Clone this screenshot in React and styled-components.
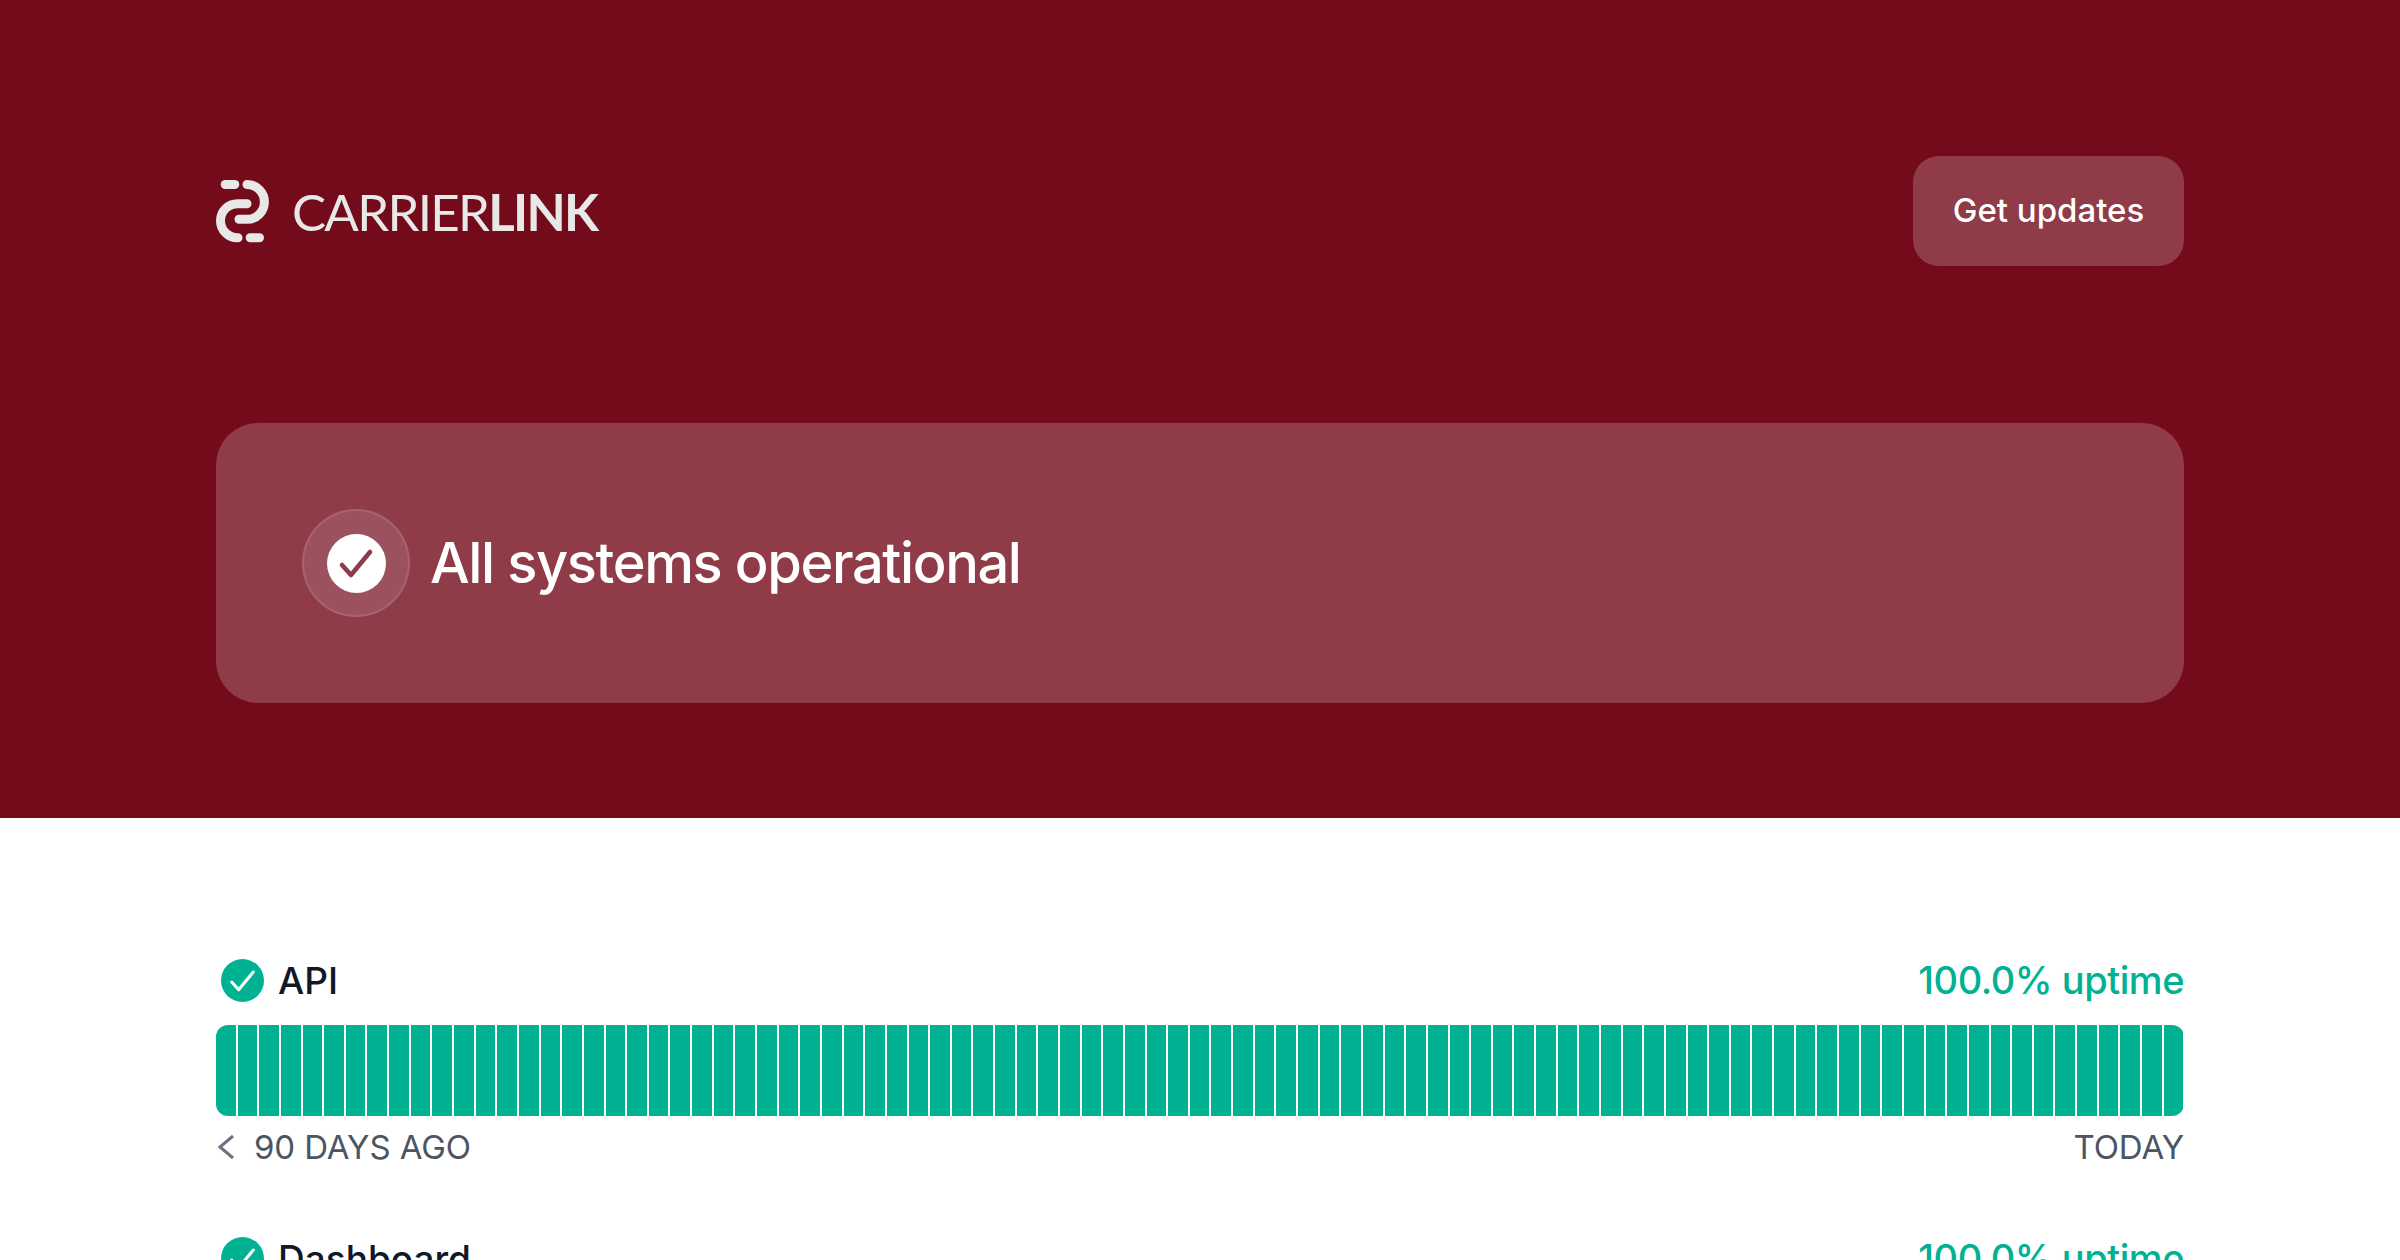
import React from "react";
import styled, { createGlobalStyle } from "styled-components";

const Global = createGlobalStyle`
  html, body { margin: 0; padding: 0; background: #fff; height: 1260px; overflow: hidden; }
  body { font-family: "Inter", "Liberation Sans", sans-serif; -webkit-font-smoothing: antialiased; }
`;
const Hero = styled.header`
  background: #730b1b;
  height: 818px;
  padding: 156px 216px 0;
  box-sizing: border-box;
`;
const TopBar = styled.div`
  display: flex;
  justify-content: space-between;
  align-items: center;
  height: 110px;
`;
const Brand = styled.div`
  display: flex;
  align-items: center;
  gap: 23px;
  color: #e8e8e8;
`;
const Wordmark = styled.div`
  font-family: "Lato", sans-serif;
  font-size: 51px;
  line-height: 1;
  font-weight: 400;
  letter-spacing: -1.7px;
  b { font-weight: 700; }
`;
const UpdatesButton = styled.button`
  width: 271px;
  height: 110px;
  border: 0;
  border-radius: 26px;
  padding: 0 0 2px;
  background: rgba(255, 255, 255, 0.2);
  color: #fff;
  font: 500 33px "Inter", sans-serif;
`;
const StatusCard = styled.section`
  margin-top: 157px;
  height: 280px;
  border-radius: 42px;
  background: rgba(255, 255, 255, 0.2);
  display: flex;
  align-items: center;
  padding-left: 86px;
  gap: 20px;
`;
const Halo = styled.span`
  width: 108px;
  height: 108px;
  box-sizing: border-box;
  border: 2px solid rgba(255, 255, 255, 0.1);
  border-radius: 50%;
  background: rgba(255, 255, 255, 0.12);
  display: flex;
  align-items: center;
  justify-content: center;
`;
const StatusTitle = styled.h1`
  margin: 0;
  color: #fff;
  font-size: 56px;
  font-weight: 500;
  line-height: 1;
  letter-spacing: -0.025em;
`;
const Services = styled.main`
  padding: 137px 216px 0;
  display: flex;
  flex-direction: column;
  gap: 66px;
`;
const ServiceRow = styled.div``;
const RowHead = styled.div`
  display: flex;
  justify-content: space-between;
  align-items: center;
  height: 50px;
  margin-bottom: 20px;
`;
const Name = styled.div`
  display: flex;
  align-items: center;
  gap: 14px;
  padding-left: 5px;
  color: #111827;
  font-size: 37px;
  font-weight: 500;
`;
const Uptime = styled.div`
  color: #00b192;
  font-size: 38px;
  font-weight: 500;
  letter-spacing: -0.012em;
`;
const Bars = styled.div`
  display: flex;
  gap: 2px;
  height: 91px;
  border-radius: 12px;
  overflow: hidden;
`;
const Bar = styled.span`
  flex: 1;
  background: #00b192;
`;
const Foot = styled.div`
  display: flex;
  justify-content: space-between;
  align-items: center;
  margin-top: 11px;
  color: #4b5563;
  font-size: 33px;
  line-height: 40px;
  letter-spacing: -0.1px;
`;
const Since = styled.span`
  display: flex;
  align-items: center;
  gap: 17px;
`;
const SmallCheck = styled.span`
  width: 43px;
  height: 43px;
  border-radius: 50%;
  background: #00b192;
  display: flex;
  align-items: center;
  justify-content: center;
`;
const BigCheck = styled.span`
  width: 59px;
  height: 59px;
  border-radius: 50%;
  background: #fff;
  display: flex;
  align-items: center;
  justify-content: center;
`;

const Logo = () => (
  <svg width="53" height="63" viewBox="0 0 53 63" fill="none" stroke="currentColor" strokeWidth="9" strokeLinecap="round">
    <path d="M9.2 4.5h9.6" />
    <path d="M31 4.5a17.4 17.4 0 0 1 0 34.8H23" />
    <path d="M31 23.7H21.5a17 17 0 0 0 0 34h.5" />
    <path d="M34.2 57.8h9.3" />
  </svg>
);
const Tick = ({ size, color, width }) => (
  <svg width={size} height={size} viewBox="0 0 24 24" fill="none" stroke={color} strokeWidth={width} strokeLinecap="round" strokeLinejoin="round">
    <path d="M5 13l4.5 5L19 6.5" />
  </svg>
);

const Service = ({ name }) => (
  <ServiceRow>
    <RowHead>
      <Name><SmallCheck><Tick size={37} color="#fff" width={2} /></SmallCheck>{name}</Name>
      <Uptime>100.0% uptime</Uptime>
    </RowHead>
    <Bars>{Array.from({ length: 91 }, (_, i) => <Bar key={i} />)}</Bars>
    <Foot>
      <Since>
        <svg width="21" height="26" viewBox="0 0 21 26" fill="none" stroke="#6b7280" strokeWidth="3"><path d="M17 2L4 13l13 11" /></svg>
        90 DAYS AGO
      </Since>
      <span>TODAY</span>
    </Foot>
  </ServiceRow>
);

export default function App() {
  return (
    <>
      <Global />
      <Hero>
        <TopBar>
          <Brand><Logo /><Wordmark>CARRIER<b>LINK</b></Wordmark></Brand>
          <UpdatesButton>Get updates</UpdatesButton>
        </TopBar>
        <StatusCard>
          <Halo><BigCheck><Tick size={48} color="#8f3b4a" width={2.3} /></BigCheck></Halo>
          <StatusTitle>All systems operational</StatusTitle>
        </StatusCard>
      </Hero>
      <Services>
        <Service name="API" />
        <Service name="Dashboard" />
      </Services>
    </>
  );
}
